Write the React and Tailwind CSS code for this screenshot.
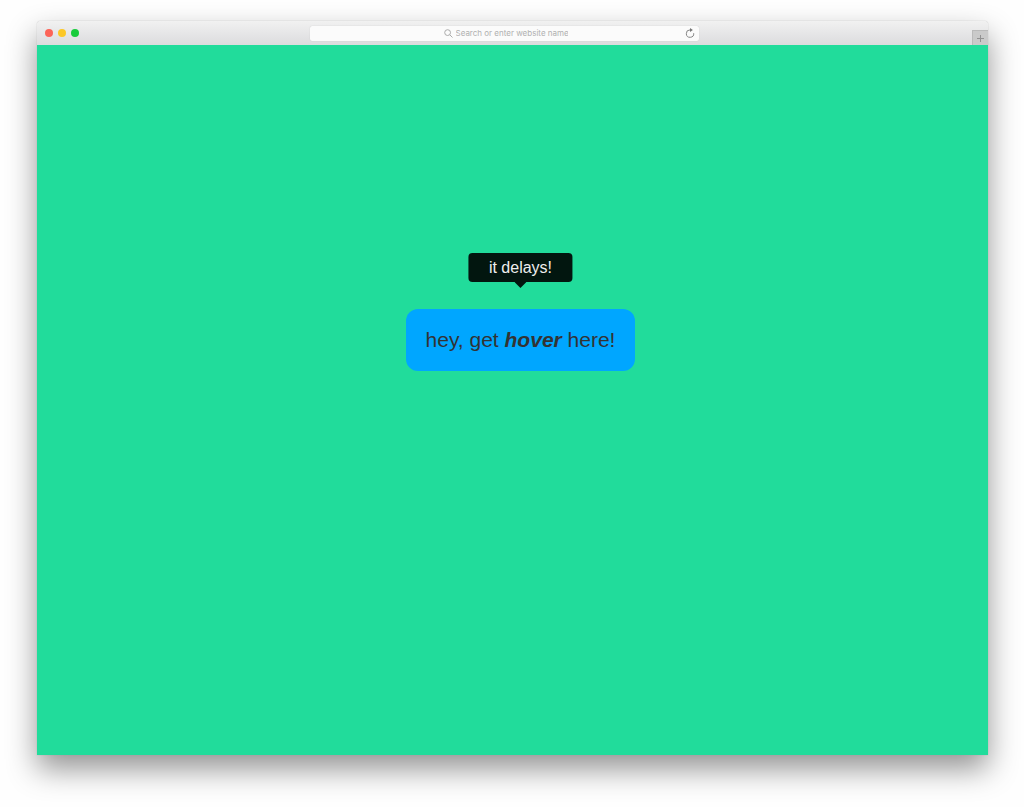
import React, { useState } from 'react'

const LIGHTS = [
  { label: 'Close', color: 'bg-[#fc6458]' },
  { label: 'Minimize', color: 'bg-[#fcc827]' },
  { label: 'Zoom', color: 'bg-[#18cc3c]' },
]

function SearchIcon() {
  return (
    <svg viewBox="0 0 9 9" className="size-[9px]" fill="none" stroke="#aaaaaa">
      <circle cx="3.6" cy="3.6" r="2.9" />
      <path d="M5.8 5.8 8.5 8.5" />
    </svg>
  )
}

function ReloadIcon() {
  return (
    <svg viewBox="0 0 10 10" className="size-[10px]" fill="none" stroke="#858585">
      <path d="M8.7 5.2A3.7 3.7 0 1 1 5 1.9H6" strokeWidth="1" />
      <path d="M5 0 7.9 2 5 4Z" fill="#777777" stroke="none" />
    </svg>
  )
}

function TitleBar() {
  const [address, setAddress] = useState('')

  return (
    <header className="flex h-6 shrink-0 items-center rounded-t bg-linear-to-b from-[#f1f1f1] to-[#dcdcde]">
      <div className="flex flex-1 gap-[5px] pl-2">
        {LIGHTS.map((l) => (
          <button key={l.label} aria-label={l.label} className={`size-2 rounded-full ${l.color}`} />
        ))}
      </div>
      <div className="flex h-[15px] w-[41%] items-center rounded-xs bg-[#fbfbfb] pr-1 pl-4 shadow-[0_0_1px_#bbbbbb]">
        <label className="flex flex-1 items-center justify-center gap-[3px]">
          <SearchIcon />
          <input
            aria-label="Address"
            value={address}
            onChange={(e) => setAddress(e.target.value)}
            placeholder="Search or enter website name"
            className="w-28 bg-transparent font-['Inter',sans-serif] text-[8px] leading-[14px] outline-none placeholder:text-[#b0b0b0]"
          />
        </label>
        <button aria-label="Reload"><ReloadIcon /></button>
      </div>
      <div className="flex-1 pr-2" />
      <button aria-label="New tab" className="flex h-[15px] w-4 items-center justify-center self-end border-t border-l border-[#bababa] bg-[#cacaca]">
        <svg viewBox="0 0 9 9" className="size-[9px]" stroke="#929292" strokeWidth="1">
          <path d="M1 4.5H8M4.5 1V8" />
        </svg>
      </button>
    </header>
  )
}

export default function App() {
  return (
    <div className="flex min-h-screen flex-col bg-[#fefefe] pt-[21px] pr-9 pb-[52px] pl-[37px] font-['Liberation_Sans',sans-serif]">
      <div className="flex flex-1 flex-col rounded-t shadow-[0_0_1px_#999999,0_14px_30px_rgba(0,0,0,0.42)]">
        <TitleBar />
        <main className="flex flex-1 flex-col items-center bg-[#21dc9b] pt-[264px] pl-4">
          <div className="relative">
            <button
              aria-describedby="delay-tip"
              className="rounded-xl bg-[#00a6ff] px-5 py-4 text-[21px] leading-[30px] whitespace-nowrap text-[#333333]"
            >
              hey, get <em className="font-bold">hover</em> here!
            </button>
            <div
              id="delay-tip"
              role="tooltip"
              className="absolute bottom-full left-1/2 mb-[27px] -translate-x-1/2 rounded bg-[#02160f] px-5 text-base leading-[29px] whitespace-nowrap text-[#eeeeee]"
            >
              it delays!
              <svg viewBox="0 0 12 6" className="absolute top-full left-1/2 h-[6px] w-3 -translate-x-1/2" fill="#02160f">
                <path d="M0 0H12L6 6Z" />
              </svg>
            </div>
          </div>
        </main>
      </div>
    </div>
  )
}
